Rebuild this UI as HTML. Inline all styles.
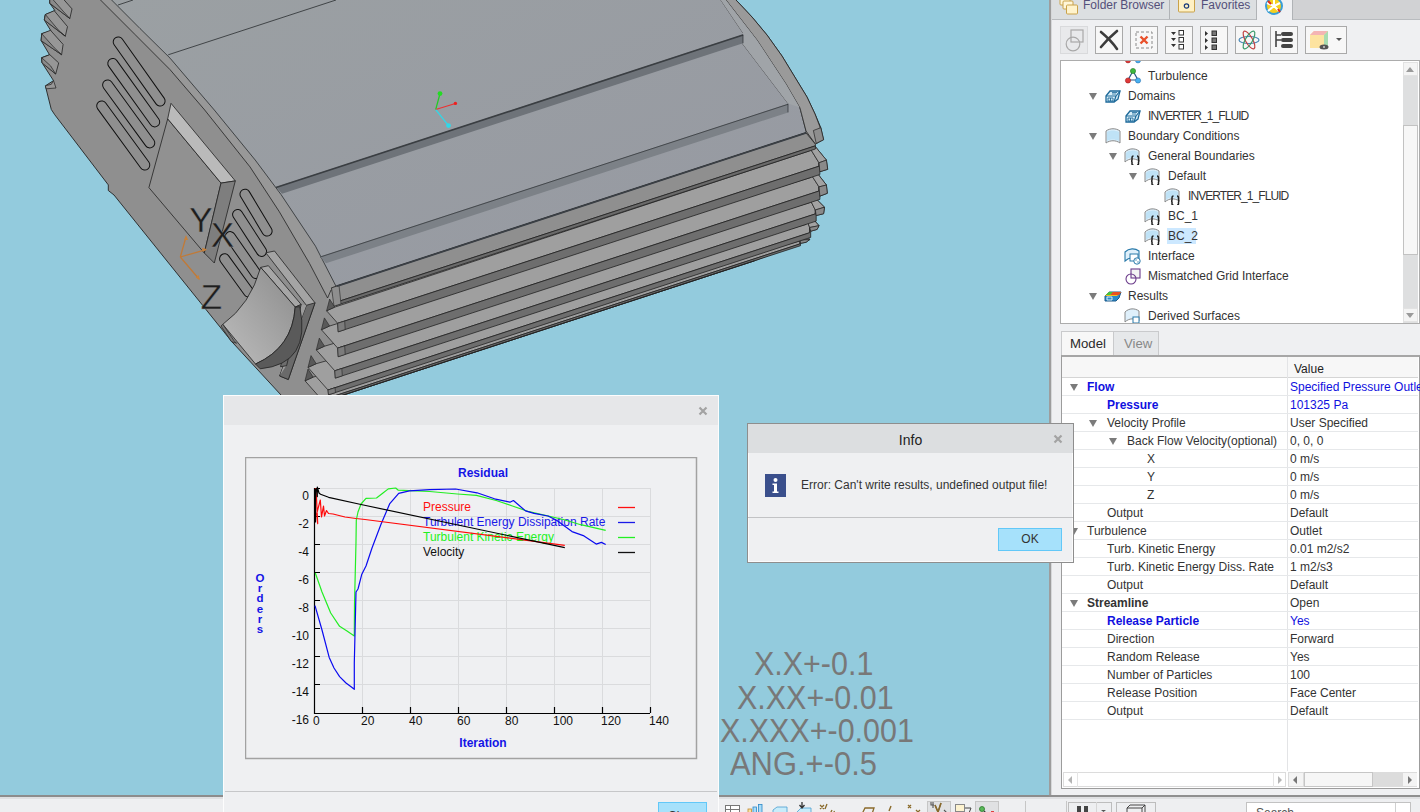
<!DOCTYPE html>
<html><head><meta charset="utf-8">
<style>
*{box-sizing:border-box}
html,body{margin:0;padding:0;width:1420px;height:812px;overflow:hidden;background:#eeeff1;font-family:"Liberation Sans",sans-serif;font-size:12px;color:#333}
.a{position:absolute}
.t{position:absolute;white-space:nowrap;line-height:14px}
#vp{left:0;top:0;width:1049px;height:795px;background:#93cbdd;overflow:hidden}
.gl{position:absolute;left:1062px;width:356px;height:1px;background:#e6e8ea}
.tri{position:absolute;width:0;height:0;border-left:4.5px solid transparent;border-right:4.5px solid transparent;border-top:7px solid #7b7b7b}
.tri2{position:absolute;width:0;height:0;border-left:4.5px solid transparent;border-right:4.5px solid transparent;border-top:7px solid #7b7b7b}
.ic{position:absolute;width:18px;height:18px}
.tb{position:absolute;top:26px;width:28px;height:28px;border:1px solid #a9a9a9;background:#f7f7f7}
</style></head><body>

<div id="vp" class="a"></div>
<svg class="a" style="left:0;top:0" width="1049" height="795" viewBox="0 0 1049 795">
<defs><linearGradient id="gtop" x1="0" y1="0" x2="1" y2="1"><stop offset="0" stop-color="#9ba0a3"/><stop offset="1" stop-color="#9699a2"/></linearGradient><linearGradient id="gblk" x1="0" y1="1" x2="1" y2="0"><stop offset="0" stop-color="#bdbdbd"/><stop offset="1" stop-color="#8c8c8c"/></linearGradient></defs>
<polygon points="50.5,-3.0 736.0,-3.0 736.0,0.0 752.0,17.0 767.0,35.0 782.0,56.0 796.0,79.0 807.0,97.0 815.0,114.0 820.8,127.7 823.6,139.7 816.2,143.4 809.7,147.7 815.3,146.6 826.4,160.1 827.7,169.3 819.9,171.7 810.7,173.9 817.1,173.0 826.4,185.0 827.3,193.3 819.9,196.1 809.7,198.9 815.3,198.0 824.5,207.2 823.6,213.7 816.2,215.5 806.0,218.3 811.6,217.4 819.0,225.7 817.1,229.4 810.7,231.2 799.6,235.9 805.1,234.0 809.7,239.6 806.0,242.3 800.5,243.3 754.5,260.8 330.0,399.4 330.0,420.0 290.0,420.0 281.0,395.0 232.0,341.9 114.0,195.0 108.3,190.5 108.3,184.9 54.8,114.8 51.3,109.5 46.1,88.8 45.4,85.8 53.5,80.6 42.1,62.9 41.7,57.7 49.5,54.7 41.2,40.7 41.7,33.7 51.0,31.0 44.3,20.0 45.4,14.5 55.0,10.7 49.8,3.3 50.5,-3.0" fill="#8f8f8f" stroke="#222" stroke-width="0.9"/>
<polygon points="110.5,-2.0 111.6,0.0 140.0,28.5 170.0,58.1 214.3,110.0 255.2,160.0 281.0,194.5 315.5,246.2 336.7,287.6 345.0,300.0 345.0,310.0 327.0,310.0 327.6,298.0 309.5,263.4 279.3,211.7 250.0,166.9 204.7,110.0 170.0,69.6 135.0,34.5 100.5,0.0 98.5,-2.0" fill="#989898" stroke="none"/>
<polyline points="98.5,-2.0 100.5,0.0 135.0,34.5 170.0,69.6 204.7,110.0 250.0,166.9 279.3,211.7 309.5,263.4 327.6,298.0 331.0,290.0" fill="none" stroke="#222" stroke-width="0.8"/>
<polygon points="110.5,-2.0 111.6,0.0 140.0,28.5 170.0,58.1 214.3,110.0 255.2,160.0 281.0,194.5 315.5,246.2 336.7,287.6 336.7,285.7 806.0,132.4 806.0,131.0 800.0,108.0 786.0,84.0 757.0,40.0 726.0,0.0 724.5,-2.0" fill="url(#gtop)" stroke="#2a2d30" stroke-width="0.8"/>
<polygon points="724.5,-2.0 736.0,-2.0 736.0,0.0 752.0,17.0 767.0,35.0 782.0,56.0 796.0,79.0 807.0,97.0 815.0,114.0 820.0,127.0 822.0,140.0 815.4,144.2 806.0,131.0 800.0,108.0 786.0,84.0 757.0,40.0" fill="#9a9a9a" stroke="#222" stroke-width="0.8"/>
<polygon points="813.4,130.5 820.8,127.7 823.6,139.7 816.2,143.4" fill="#8e8e8e" stroke="#222" stroke-width="0.7"/>
<polyline points="719.5,-2.0 743.0,33.0" fill="none" stroke="#333" stroke-width="0.7"/>
<polyline points="742.0,43.0 788.0,103.4" fill="none" stroke="#333" stroke-width="0.7"/>
<polygon points="720.7,0.0 726.0,0.0 757.0,40.0 786.0,84.0 800.0,108.0 806.0,131.0 800.0,107.4 788.0,103.4 742.0,43.0 743.0,33.0" fill="#a0a4a8" stroke="none"/>
<polyline points="118.0,5.0 133.0,0.0" fill="none" stroke="#2a2d30" stroke-width="0.8"/>
<polyline points="168.2,54.8 336.0,0.0" fill="none" stroke="#2a2d30" stroke-width="0.8"/>
<polygon points="276.0,187.1 743.0,34.6 743.0,43.2 282.0,193.7" fill="#6e7379" stroke="none"/>
<polyline points="276.0,187.6 743.0,35.1" fill="none" stroke="#3a3e42" stroke-width="1.6"/>
<polyline points="743.0,34.6 743.0,43.2" fill="none" stroke="#2a2d30" stroke-width="0.7"/>
<polygon points="320.0,256.6 788.0,103.8 788.0,112.4 326.0,263.3" fill="#7c8187" stroke="none"/>
<polyline points="320.0,257.1 788.0,104.3" fill="none" stroke="#44484c" stroke-width="1.0"/>
<polyline points="788.0,103.8 788.0,112.4" fill="none" stroke="#2a2d30" stroke-width="0.7"/>
<polygon points="305.0,380.8 313.2,377.1 799.6,241.0 799.6,235.9 800.0,240.0 800.0,243.9 322.0,400.0" fill="#9f9f9f" stroke="#222" stroke-width="0.75"/>
<polygon points="322.0,400.0 800.0,243.9 800.0,240.0 800.5,243.3 800.5,245.7 322.5,401.8" fill="#6e6e6e" stroke="#1e1e1e" stroke-width="0.75"/>
<polygon points="322.0,400.0 329.0,397.7 329.5,399.5 322.5,401.8" fill="#7c7c7c" stroke="#222" stroke-width="0.6"/>
<polygon points="305.0,380.8 308.0,369.0 313.2,377.1" fill="#595959" stroke="#222" stroke-width="0.6"/>
<polygon points="799.6,235.9 805.1,234.0 809.7,239.6 800.0,240.0" fill="#a2a2a2" stroke="#222" stroke-width="0.7"/>
<polygon points="800.0,240.0 809.7,239.6 806.0,242.3 800.5,243.3" fill="#8a8a8a" stroke="#222" stroke-width="0.7"/>
<polygon points="308.0,367.4 316.2,363.7 806.0,224.4 806.0,218.3 809.7,227.5 809.7,232.7 328.0,390.0" fill="#9f9f9f" stroke="#222" stroke-width="0.75"/>
<polygon points="328.0,390.0 809.7,232.7 809.7,227.5 810.7,231.2 810.7,237.4 328.5,394.8" fill="#6e6e6e" stroke="#1e1e1e" stroke-width="0.75"/>
<polygon points="328.0,390.0 335.0,387.7 335.5,392.6 328.5,394.8" fill="#7c7c7c" stroke="#222" stroke-width="0.6"/>
<polygon points="308.0,367.4 311.0,355.6 316.2,363.7" fill="#595959" stroke="#222" stroke-width="0.6"/>
<polygon points="806.0,218.3 811.6,217.4 819.0,225.7 809.7,227.5" fill="#a2a2a2" stroke="#222" stroke-width="0.7"/>
<polygon points="809.7,227.5 819.0,225.7 817.1,229.4 810.7,231.2" fill="#8a8a8a" stroke="#222" stroke-width="0.7"/>
<polygon points="316.3,349.9 324.5,346.2 809.7,202.7 809.7,198.9 815.3,210.0 815.3,213.9 334.8,370.8" fill="#9f9f9f" stroke="#222" stroke-width="0.75"/>
<polygon points="334.8,370.8 815.3,213.9 815.3,210.0 816.2,215.5 816.2,221.1 335.3,378.1" fill="#6e6e6e" stroke="#1e1e1e" stroke-width="0.75"/>
<polygon points="334.8,370.8 341.8,368.5 342.3,375.8 335.3,378.1" fill="#7c7c7c" stroke="#222" stroke-width="0.6"/>
<polygon points="316.3,349.9 319.3,338.1 324.5,346.2" fill="#595959" stroke="#222" stroke-width="0.6"/>
<polygon points="809.7,198.9 815.3,198.0 824.5,207.2 815.3,210.0" fill="#a2a2a2" stroke="#222" stroke-width="0.7"/>
<polygon points="815.3,210.0 824.5,207.2 823.6,213.7 816.2,215.5" fill="#8a8a8a" stroke="#222" stroke-width="0.7"/>
<polygon points="321.4,329.7 329.6,326.0 810.7,177.5 810.7,173.9 819.0,186.9 819.0,191.0 337.7,348.1" fill="#9f9f9f" stroke="#222" stroke-width="0.75"/>
<polygon points="337.7,348.1 819.0,191.0 819.0,186.9 819.9,196.1 819.9,199.4 338.2,356.7" fill="#6e6e6e" stroke="#1e1e1e" stroke-width="0.75"/>
<polygon points="337.7,348.1 344.7,345.9 345.2,354.4 338.2,356.7" fill="#7c7c7c" stroke="#222" stroke-width="0.6"/>
<polygon points="321.4,329.7 324.4,317.9 329.6,326.0" fill="#595959" stroke="#222" stroke-width="0.6"/>
<polygon points="810.7,173.9 817.1,173.0 826.4,185.0 819.0,186.9" fill="#a2a2a2" stroke="#222" stroke-width="0.7"/>
<polygon points="819.0,186.9 826.4,185.0 827.3,193.3 819.9,196.1" fill="#8a8a8a" stroke="#222" stroke-width="0.7"/>
<polygon points="326.6,310.8 334.8,307.1 809.7,150.8 809.7,147.7 819.0,162.8 819.0,166.2 337.7,323.3" fill="#9f9f9f" stroke="#222" stroke-width="0.75"/>
<polygon points="337.7,323.3 819.0,166.2 819.0,162.8 819.9,171.7 819.9,174.5 338.2,331.8" fill="#6e6e6e" stroke="#1e1e1e" stroke-width="0.75"/>
<polygon points="337.7,323.3 344.7,321.1 345.2,329.5 338.2,331.8" fill="#7c7c7c" stroke="#222" stroke-width="0.6"/>
<polygon points="326.6,310.8 329.6,299.0 334.8,307.1" fill="#595959" stroke="#222" stroke-width="0.6"/>
<polygon points="809.7,147.7 815.3,146.6 826.4,160.1 819.0,162.8" fill="#a2a2a2" stroke="#222" stroke-width="0.7"/>
<polygon points="819.0,162.8 826.4,160.1 827.7,169.3 819.9,171.7" fill="#8a8a8a" stroke="#222" stroke-width="0.7"/>
<polygon points="331.5,287.9 806.0,132.9 815.4,144.2 815.4,145.8 335.0,302.6" fill="#8f8f8f" stroke="#222" stroke-width="0.75"/>
<polygon points="335.0,302.6 815.4,145.8 815.4,149.0 336.0,305.5" fill="#6a6a6a" stroke="#1e1e1e" stroke-width="0.75"/>
<polygon points="331.5,287.9 339.0,285.4 341.0,303.9 334.0,306.1" fill="#8e8e8e" stroke="#222" stroke-width="0.6"/>
<polyline points="754.5,260.8 330.0,399.4" fill="none" stroke="#222" stroke-width="0.9"/>
<polyline points="337.0,286.2 806.0,133.0" fill="none" stroke="#3a3f45" stroke-width="1.6"/>
<polygon points="49.8,-4.0 58.0,-7.0 72.0,8.9 69.8,18.5 49.8,3.3" fill="#979797" stroke="#222" stroke-width="0.8"/>
<polygon points="49.8,-4.0 63.8,11.9 69.8,18.5 49.8,3.3" fill="#8a8a8a" stroke="#222" stroke-width="0.7"/>
<polygon points="45.4,14.5 54.2,10.7 67.5,26.6 65.3,36.2 44.3,20.0" fill="#979797" stroke="#222" stroke-width="0.8"/>
<polygon points="45.4,14.5 58.7,30.4 65.3,36.2 44.3,20.0" fill="#8a8a8a" stroke="#222" stroke-width="0.7"/>
<polygon points="41.7,33.7 50.5,30.3 63.1,44.4 61.6,54.7 41.2,40.7" fill="#979797" stroke="#222" stroke-width="0.8"/>
<polygon points="41.7,33.7 54.3,47.8 61.6,54.7 41.2,40.7" fill="#8a8a8a" stroke="#222" stroke-width="0.7"/>
<polygon points="41.7,57.7 49.8,54.7 58.7,62.9 55.7,74.0 42.1,62.9" fill="#979797" stroke="#222" stroke-width="0.8"/>
<polygon points="41.7,57.7 50.6,65.9 55.7,74.0 42.1,62.9" fill="#8a8a8a" stroke="#222" stroke-width="0.7"/>
<polygon points="45.4,85.8 51.3,84.3 53.5,80.6 56.0,88.0 46.1,88.8" fill="#979797" stroke="#222" stroke-width="0.7"/>
<line x1="118.2" y1="41.9" x2="160.1" y2="101" stroke="#111" stroke-width="11" stroke-linecap="round"/>
<line x1="118.2" y1="41.9" x2="160.1" y2="101" stroke="#8f8f8f" stroke-width="9" stroke-linecap="round"/>
<line x1="112.8" y1="63.5" x2="154.7" y2="121.9" stroke="#111" stroke-width="11" stroke-linecap="round"/>
<line x1="112.8" y1="63.5" x2="154.7" y2="121.9" stroke="#8f8f8f" stroke-width="9" stroke-linecap="round"/>
<line x1="107.6" y1="85" x2="149.8" y2="142.9" stroke="#111" stroke-width="11" stroke-linecap="round"/>
<line x1="107.6" y1="85" x2="149.8" y2="142.9" stroke="#8f8f8f" stroke-width="9" stroke-linecap="round"/>
<line x1="101.7" y1="105.9" x2="144.8" y2="165" stroke="#111" stroke-width="11" stroke-linecap="round"/>
<line x1="101.7" y1="105.9" x2="144.8" y2="165" stroke="#8f8f8f" stroke-width="9" stroke-linecap="round"/>
<line x1="245" y1="194.2" x2="267.1" y2="231.1" stroke="#111" stroke-width="11" stroke-linecap="round"/>
<line x1="245" y1="194.2" x2="267.1" y2="231.1" stroke="#8f8f8f" stroke-width="9" stroke-linecap="round"/>
<line x1="237.6" y1="214.5" x2="261.6" y2="251.4" stroke="#111" stroke-width="11" stroke-linecap="round"/>
<line x1="237.6" y1="214.5" x2="261.6" y2="251.4" stroke="#8f8f8f" stroke-width="9" stroke-linecap="round"/>
<line x1="230.2" y1="236.6" x2="256" y2="273.6" stroke="#111" stroke-width="11" stroke-linecap="round"/>
<line x1="230.2" y1="236.6" x2="256" y2="273.6" stroke="#8f8f8f" stroke-width="9" stroke-linecap="round"/>
<line x1="224.6" y1="258.8" x2="248.6" y2="292" stroke="#111" stroke-width="11" stroke-linecap="round"/>
<line x1="224.6" y1="258.8" x2="248.6" y2="292" stroke="#8f8f8f" stroke-width="9" stroke-linecap="round"/>
<polygon points="167.7,118.8 221.0,183.1 204.3,253.0 148.9,187.6" fill="#919191" stroke="#222" stroke-width="0.8"/>
<polygon points="171.0,103.3 235.3,180.9 221.0,183.1 167.7,118.8" fill="#bababa" stroke="#222" stroke-width="0.8"/>
<polygon points="235.3,180.9 214.3,263.0 204.3,253.0 221.0,183.1" fill="#7e7e7e" stroke="#222" stroke-width="0.8"/>
<polygon points="265.9,252.8 274.5,251.0 315.0,302.8 288.3,379.5 279.7,376.0 306.4,305.3" fill="#a4a4a4" stroke="#222" stroke-width="0.8"/>
<polygon points="306.4,305.3 315.0,302.8 288.3,379.5 279.7,376.0" fill="#6a6a6a" stroke="#222" stroke-width="0.8"/>
<polygon points="301.2,304.5 306.4,305.3 279.7,376.0 285.7,366.6" fill="#9c9c9c" stroke="none"/>
<polygon points="260.7,267.4 268.4,265.7 301.2,304.5 295.2,307.1" fill="#a6a6a6" stroke="#222" stroke-width="0.8"/>
<polygon points="295.2,307.1 301.2,304.5 286.6,365.7 280.5,366.7" fill="#6e6e6e" stroke="#222" stroke-width="0.8"/>
<path d="M222.8 324.3 Q250.3 304.5 260.7 267.4 L295.2 307.1 Q292.6 347.6 255.5 364.0 Z" fill="url(#gblk)" stroke="#222" stroke-width="0.8"/>
<path d="M295.2 307.1 L299.8 306.7 Q311.6 364.0 260.2 368.8 L255.5 364.0 Q292.6 347.6 295.2 307.1Z" fill="#5a5a5a" stroke="#222" stroke-width="0.8"/>
<polygon points="222.8,324.3 221.0,326.0 231.4,341.6 236.6,343.3 234.0,340.7" fill="#7a7a7a" stroke="#222" stroke-width="0.7"/>
<g font-family="Liberation Sans" font-size="35" fill="#1e1e1e" stroke="#8f8f8f" stroke-width="0.4"><text x="189.3" y="232">Y</text><text x="210.8" y="246.5">X</text><text x="200.8" y="308.8">Z</text></g>
<path d="M180.3 257 L186 237 M180.3 257 L206 249.6 M180.3 257 L199 279" stroke="#c07a38" stroke-width="1.3" fill="none"/>
<path d="M186 235 l-2 5 h4z M207 249.3 l-5 -1.5 1 4z M200 280 l-1.5 -5 -3 2.5z" fill="#c8813a"/>
<path d="M435.7 109.6 L440 93.6" stroke="#22cc22" stroke-width="1.3"/><circle cx="440" cy="93.6" r="2.4" fill="#22dd22"/>
<path d="M435.7 109.6 L455.4 103.4" stroke="#ee3030" stroke-width="1.1"/><circle cx="455.4" cy="103.4" r="1.7" fill="#ee2020"/>
<path d="M435.7 109.6 L448.5 125.6" stroke="#30d8e8" stroke-width="1.3"/><circle cx="448.5" cy="125.6" r="2.4" fill="#30d8e8"/>
</svg>
<div class="a" style="left:0;top:795px;width:1049px;height:2px;background:#8c8c8c"></div>
<div class="a" style="left:0;top:797px;width:1049px;height:2px;background:#dfe0e2"></div>

<!-- right panel -->
<div class="a" style="left:1049px;top:0;width:371px;height:795px;background:#eff0f2"></div>
<div class="a" style="left:1049px;top:0;width:2px;height:797px;background:#9d9d9d"></div>
<div class="a" style="left:1051px;top:0;width:1px;height:795px;background:#d6d8da"></div>
<!-- tab strip -->
<div class="a" style="left:1052px;top:0;width:368px;height:19px;background:#dcdfe1"></div>
<div class="a" style="left:1292px;top:0;width:128px;height:19px;background:#d1d2d4"></div>
<div class="a" style="left:1052px;top:19px;width:368px;height:1px;background:#b9bcbf"></div>
<div class="a" style="left:1169px;top:0;width:1px;height:19px;background:#b0b3b6"></div>
<div class="a" style="left:1256px;top:0;width:1px;height:20px;background:#b0b3b6"></div>
<div class="a" style="left:1257px;top:0;width:35px;height:20px;background:#eff0f2"></div>
<div class="a" style="left:1292px;top:0;width:1px;height:20px;background:#b0b3b6"></div>
<div class="t" style="left:1083px;top:-2px;color:#54507a">Folder Browser</div>
<div class="t" style="left:1201px;top:-2px;color:#54507a">Favorites</div>
<svg class="a" style="left:1059px;top:0" width="22" height="16" viewBox="0 0 22 16">
<rect x="1" y="-3" width="10" height="8" rx="1" fill="#fff6d8" stroke="#c9a24a"/>
<rect x="4" y="1" width="10" height="8" rx="1" fill="#fff6d8" stroke="#c9a24a"/>
<rect x="7.5" y="5" width="11" height="9" rx="1" fill="#fff3cc" stroke="#c9a24a"/>
</svg>
<svg class="a" style="left:1177px;top:0" width="20" height="14" viewBox="0 0 20 14">
<rect x="1.5" y="-2" width="16" height="14" rx="1" fill="#fff1c4" stroke="#c9a24a"/>
<circle cx="9.5" cy="6" r="2.2" fill="none" stroke="#1a3a7a" stroke-width="1.2"/>
</svg>
<svg class="a" style="left:1264px;top:0" width="20" height="16" viewBox="0 0 20 16">
<ellipse cx="10" cy="6" rx="9" ry="9" fill="#3a9ed8"/>
<ellipse cx="10" cy="6" rx="7" ry="7" fill="#f5d020"/>
<path d="M10 6 L10 -1 M10 6 L16 3 M10 6 L15 11 M10 6 L4 11 M10 6 L3 3" stroke="#fff" stroke-width="2"/>
<circle cx="10" cy="6" r="2" fill="#fff"/>
<path d="M4 1 L7 4 M14 9 L16 12" stroke="#e03020" stroke-width="2"/>
</svg>
<!-- toolbar buttons -->
<div class="tb" style="left:1060px;background:#e8e9eb;border-color:#d9dadc"></div>
<svg class="a" style="left:1060px;top:26px" width="28" height="28" viewBox="0 0 28 28">
<rect x="11" y="4" width="12" height="12" fill="none" stroke="#a8a8a8" stroke-width="1.2"/>
<circle cx="13" cy="18" r="6.8" fill="none" stroke="#a8a8a8" stroke-width="1.2"/>
</svg>
<div class="tb" style="left:1095px"></div>
<svg class="a" style="left:1095px;top:26px" width="28" height="28" viewBox="0 0 28 28">
<path d="M6 6 C12 11 18 17 22 23 M22 5 C16 10 11 15 6 21" stroke="#3c3c3c" stroke-width="2.6" fill="none" stroke-linecap="round"/>
</svg>
<div class="tb" style="left:1130px"></div>
<svg class="a" style="left:1130px;top:26px" width="28" height="28" viewBox="0 0 28 28">
<rect x="6" y="6" width="16" height="16" fill="none" stroke="#8a8a8a" stroke-dasharray="3 2"/>
<path d="M10.5 10.5 L17.5 17.5 M17.5 10.5 L10.5 17.5" stroke="#e8502a" stroke-width="2.4"/>
</svg>
<div class="tb" style="left:1165px"></div>
<svg class="a" style="left:1165px;top:26px" width="28" height="28" viewBox="0 0 28 28">
<path d="M6 6 h5 l-2.5 3z M6 12 h5 l-2.5 3z M6 18 h5 l-2.5 3z" fill="#333"/>
<rect x="14" y="4.5" width="4.5" height="4.5" fill="#fff" stroke="#333"/>
<rect x="14" y="11.5" width="4.5" height="4.5" fill="#fff" stroke="#333"/>
<rect x="14" y="18.5" width="4.5" height="4.5" fill="#fff" stroke="#333"/>
</svg>
<div class="tb" style="left:1200px"></div>
<svg class="a" style="left:1200px;top:26px" width="28" height="28" viewBox="0 0 28 28">
<path d="M5 5 v5 l3 -2.5z M5 12 v5 l3 -2.5z M5 19 v5 l3 -2.5z" fill="#333"/>
<rect x="12" y="5" width="4.5" height="4.5" fill="#777" stroke="#333"/>
<rect x="12" y="12" width="4.5" height="4.5" fill="#777" stroke="#333"/>
<rect x="12" y="19" width="4.5" height="4.5" fill="#777" stroke="#333"/>
</svg>
<div class="tb" style="left:1235px"></div>
<svg class="a" style="left:1235px;top:26px" width="28" height="28" viewBox="0 0 28 28">
<ellipse cx="14" cy="14" rx="10" ry="3.5" fill="none" stroke="#4a88b8" stroke-width="1.2"/>
<ellipse cx="14" cy="14" rx="10" ry="3.5" fill="none" stroke="#c04040" stroke-width="1.2" transform="rotate(60 14 14)"/>
<ellipse cx="14" cy="14" rx="10" ry="3.5" fill="none" stroke="#3a9a6a" stroke-width="1.2" transform="rotate(-60 14 14)"/>
</svg>
<div class="tb" style="left:1270px"></div>
<svg class="a" style="left:1270px;top:26px" width="28" height="28" viewBox="0 0 28 28">
<path d="M6 5 v16 M6 9 h5 M6 14 h5" stroke="#444" stroke-width="1.6" fill="none"/>
<rect x="11" y="6" width="12" height="4" rx="2" fill="#444"/>
<rect x="11" y="12" width="12" height="4" rx="2" fill="#444"/>
<rect x="11" y="18" width="12" height="4" rx="2" fill="#444"/>
</svg>
<div class="tb" style="left:1305px;width:42px"></div>
<svg class="a" style="left:1305px;top:26px" width="42" height="28" viewBox="0 0 42 28">
<path d="M5 9 L9 5 H23 V22 H5z" fill="#fde3a0"/>
<path d="M5 9 L9 5 H23 L19 9z" fill="#f4b4b4"/>
<path d="M19 9 L23 5 V20 L19 23z" fill="#a8dcb0"/>
<ellipse cx="19" cy="21" rx="4.5" ry="2.5" fill="#555"/>
<circle cx="19" cy="21" r="1" fill="#ccc"/>
<path d="M31 12 h6 l-3 3z" fill="#555"/>
</svg>
<!-- tree box -->
<div class="a" style="left:1060px;top:60px;width:360px;height:264px;background:#fff;border:1px solid #acacac"></div>
<div class="a" style="left:1403px;top:62px;width:15px;height:261px;background:#dedfe0"></div>
<div class="a" style="left:1403px;top:62px;width:15px;height:14px;background:#f4f4f4;border:1px solid #e2e2e2"></div>
<div class="a" style="left:1403px;top:308px;width:15px;height:14px;background:#f4f4f4;border:1px solid #e2e2e2"></div>
<div class="a" style="left:1403px;top:125px;width:15px;height:130px;background:#f7f7f7;border:1px solid #c2c2c2"></div>
<div class="a" style="left:1406px;top:67px;width:0;height:0;border-left:4.5px solid transparent;border-right:4.5px solid transparent;border-bottom:5px solid #9a9a9a"></div>
<div class="a" style="left:1406px;top:313px;width:0;height:0;border-left:4.5px solid transparent;border-right:4.5px solid transparent;border-top:5px solid #9a9a9a"></div>
<div class="a" style="left:0;top:0;width:1420px;height:812px;clip-path:inset(61px 17px 489px 1061px)">
<svg class="a" style="left:1124px;top:52px" width="18" height="12"><circle cx="4" cy="8.3" r="2.6" fill="#e03838" stroke="#9a2020" stroke-width=".6"/><circle cx="14" cy="8.3" r="2.6" fill="#48b0f0" stroke="#2a70b0" stroke-width=".6"/></svg>
<div class="ic" style="left:1124px;top:67px"><svg width="18" height="18" viewBox="0 0 18 18"><path d="M9 4 L4 13 H14 Z" fill="none" stroke="#2a5a8a" stroke-width="1.2"/><circle cx="9" cy="4" r="2.6" fill="#3cb83c" stroke="#2a7a2a" stroke-width=".6"/><circle cx="4" cy="13.5" r="2.6" fill="#e03838" stroke="#9a2020" stroke-width=".6"/><circle cx="14" cy="13.5" r="2.6" fill="#48b0f0" stroke="#2a70b0" stroke-width=".6"/></svg></div>
<div class="t" style="left:1148px;top:69px">Turbulence</div>
<div class="tri2" style="left:1089px;top:93px"></div>
<div class="ic" style="left:1104px;top:87px"><svg width="18" height="18" viewBox="0 0 18 18"><path d="M2 9 L6 4 H16 L14 12 L10 15 H2 Z" fill="#d8eef8" stroke="#1e6a9a" stroke-width="1.3"/><path d="M2 9 H12 L16 4 M12 9 L10 15" fill="none" stroke="#1e6a9a" stroke-width="1.2"/><path d="M4 11 h5 v3 h-5z M6.5 11 v3" fill="none" stroke="#1e6a9a" stroke-width=".9"/><path d="M8 5.5 h5 M8 7 h4" stroke="#1e6a9a" stroke-width=".8"/></svg></div>
<div class="t" style="left:1128px;top:89px">Domains</div>
<div class="ic" style="left:1124px;top:107px"><svg width="18" height="18" viewBox="0 0 18 18"><path d="M2 9 L6 4 H16 L14 12 L10 15 H2 Z" fill="#d8eef8" stroke="#1e6a9a" stroke-width="1.3"/><path d="M2 9 H12 L16 4 M12 9 L10 15" fill="none" stroke="#1e6a9a" stroke-width="1.2"/><path d="M4 11 h5 v3 h-5z M6.5 11 v3" fill="none" stroke="#1e6a9a" stroke-width=".9"/><path d="M8 5.5 h5 M8 7 h4" stroke="#1e6a9a" stroke-width=".8"/></svg></div>
<div class="t" style="left:1148px;top:109px;letter-spacing:-0.93px">INVERTER_1_FLUID</div>
<div class="tri2" style="left:1089px;top:133px"></div>
<div class="ic" style="left:1104px;top:127px"><svg width="18" height="18" viewBox="0 0 18 18"><path d="M2 4 C6 1 12 1 16 4 V16 C12 13 6 13 2 16 Z" fill="#dff0fb" stroke="#8a8a8a" stroke-width="1"/><path d="M3 5 C6 3 11 3 15 5 V14 C11 12 6 12 3 14Z" fill="#bfe2f6"/></svg></div>
<div class="t" style="left:1128px;top:129px">Boundary Conditions</div>
<div class="tri2" style="left:1109px;top:153px"></div>
<div class="ic" style="left:1124px;top:147px"><svg width="18" height="18" viewBox="0 0 18 18"><path d="M1 5 C5 1 11 1 15 4 V14 C11 11 5 11 1 15 Z" fill="#dff0fb" stroke="#8a8a8a" stroke-width="1"/><path d="M2 6 C5 3 10 3 14 5 V12 C10 10 5 10 2 13Z" fill="#bfe2f6"/><path d="M9.5 9 q-1.5 0 -1.5 2 v2 q0 1 -1 1 q1 0 1 1 v2 q0 1 1.5 1 M13 9 q1.5 0 1.5 2 v2 q0 1 1 1 q-1 0 -1 1 v2 q0 1 -1.5 1" fill="none" stroke="#222" stroke-width="1.5"/></svg></div>
<div class="t" style="left:1148px;top:149px">General Boundaries</div>
<div class="tri2" style="left:1129px;top:173px"></div>
<div class="ic" style="left:1144px;top:167px"><svg width="18" height="18" viewBox="0 0 18 18"><path d="M1 5 C5 1 11 1 15 4 V14 C11 11 5 11 1 15 Z" fill="#dff0fb" stroke="#8a8a8a" stroke-width="1"/><path d="M2 6 C5 3 10 3 14 5 V12 C10 10 5 10 2 13Z" fill="#bfe2f6"/><path d="M9.5 9 q-1.5 0 -1.5 2 v2 q0 1 -1 1 q1 0 1 1 v2 q0 1 1.5 1 M13 9 q1.5 0 1.5 2 v2 q0 1 1 1 q-1 0 -1 1 v2 q0 1 -1.5 1" fill="none" stroke="#222" stroke-width="1.5"/></svg></div>
<div class="t" style="left:1168px;top:169px">Default</div>
<div class="ic" style="left:1164px;top:187px"><svg width="18" height="18" viewBox="0 0 18 18"><path d="M1 5 C5 1 11 1 15 4 V14 C11 11 5 11 1 15 Z" fill="#dff0fb" stroke="#8a8a8a" stroke-width="1"/><path d="M2 6 C5 3 10 3 14 5 V12 C10 10 5 10 2 13Z" fill="#bfe2f6"/><path d="M9.5 9 q-1.5 0 -1.5 2 v2 q0 1 -1 1 q1 0 1 1 v2 q0 1 1.5 1 M13 9 q1.5 0 1.5 2 v2 q0 1 1 1 q-1 0 -1 1 v2 q0 1 -1.5 1" fill="none" stroke="#222" stroke-width="1.5"/></svg></div>
<div class="t" style="left:1188px;top:189px;letter-spacing:-0.93px">INVERTER_1_FLUID</div>
<div class="ic" style="left:1144px;top:207px"><svg width="18" height="18" viewBox="0 0 18 18"><path d="M1 5 C5 1 11 1 15 4 V14 C11 11 5 11 1 15 Z" fill="#dff0fb" stroke="#8a8a8a" stroke-width="1"/><path d="M2 6 C5 3 10 3 14 5 V12 C10 10 5 10 2 13Z" fill="#bfe2f6"/><path d="M9.5 9 q-1.5 0 -1.5 2 v2 q0 1 -1 1 q1 0 1 1 v2 q0 1 1.5 1 M13 9 q1.5 0 1.5 2 v2 q0 1 1 1 q-1 0 -1 1 v2 q0 1 -1.5 1" fill="none" stroke="#222" stroke-width="1.5"/></svg></div>
<div class="t" style="left:1168px;top:209px">BC_1</div>
<div class="ic" style="left:1144px;top:227px"><svg width="18" height="18" viewBox="0 0 18 18"><path d="M1 5 C5 1 11 1 15 4 V14 C11 11 5 11 1 15 Z" fill="#dff0fb" stroke="#8a8a8a" stroke-width="1"/><path d="M2 6 C5 3 10 3 14 5 V12 C10 10 5 10 2 13Z" fill="#bfe2f6"/><path d="M9.5 9 q-1.5 0 -1.5 2 v2 q0 1 -1 1 q1 0 1 1 v2 q0 1 1.5 1 M13 9 q1.5 0 1.5 2 v2 q0 1 1 1 q-1 0 -1 1 v2 q0 1 -1.5 1" fill="none" stroke="#222" stroke-width="1.5"/></svg></div>
<div class="a" style="left:1167px;top:228px;width:29px;height:16px;background:#cce8ff"></div>
<div class="t" style="left:1168px;top:229px">BC_2</div>
<div class="ic" style="left:1124px;top:247px"><svg width="18" height="18" viewBox="0 0 18 18"><path d="M1 5 C5 1 11 1 15 4 V13 C11 10 5 10 1 14 Z" fill="#dff0fb" stroke="#2a7aaa" stroke-width="1.1"/><rect x="6" y="7" width="8" height="7" fill="#fff" stroke="#2a7aaa"/><circle cx="13" cy="14" r="3.2" fill="#fff" stroke="#2a7aaa"/><circle cx="12" cy="13" r=".7" fill="#2a7aaa"/><circle cx="14" cy="15" r=".7" fill="#2a7aaa"/></svg></div>
<div class="t" style="left:1148px;top:249px">Interface</div>
<div class="ic" style="left:1124px;top:267px"><svg width="18" height="18" viewBox="0 0 18 18"><rect x="7" y="2" width="9" height="9" fill="#f4f4f4" stroke="#6a3a8a" stroke-width="1.1"/><circle cx="7" cy="12" r="5" fill="none" stroke="#6a3a8a" stroke-width="1.1"/></svg></div>
<div class="t" style="left:1148px;top:269px">Mismatched Grid Interface</div>
<div class="tri2" style="left:1089px;top:293px"></div>
<div class="ic" style="left:1104px;top:287px"><svg width="18" height="18" viewBox="0 0 18 18"><path d="M1 9 L5 5 H17 L15 11 L12 14 H1 Z" fill="#2a8ac8" stroke="#1e5a8a" stroke-width="1"/><path d="M5 5 H17 L13 9 H1z" fill="#f0c020"/><path d="M8 5 H17 L15 8 H6z" fill="#e85020"/><path d="M2 8 L5 5 H9 L6 8z" fill="#40c840"/><path d="M3 10 h5 v3 h-5z" fill="none" stroke="#fff" stroke-width=".8"/></svg></div>
<div class="t" style="left:1128px;top:289px">Results</div>
<div class="ic" style="left:1124px;top:307px"><svg width="18" height="18" viewBox="0 0 18 18"><path d="M1 5 C5 1 11 1 15 4 V14 C11 11 5 11 1 15 Z" fill="#dff0fb" stroke="#8a8a8a" stroke-width="1"/><rect x="9" y="10" width="6" height="6" fill="#fff" stroke="#2a7aaa"/></svg></div>
<div class="t" style="left:1148px;top:309px">Derived Surfaces</div>
</div>

<!-- model/view tabs -->
<div class="a" style="left:1061px;top:331px;width:53px;height:25px;background:#f7f7f7;border:1px solid #c9cacc;border-bottom:none"></div>
<div class="a" style="left:1113px;top:331px;width:46px;height:24px;background:#e6e8ea;border:1px solid #c9cacc;border-bottom:none"></div>
<div class="t" style="left:1070px;top:337px;font-size:13.2px;color:#2a2a2a">Model</div>
<div class="t" style="left:1124px;top:337px;font-size:13.2px;color:#888">View</div>
<!-- grid -->
<div class="a" style="left:1061px;top:355px;width:359px;height:434px;background:#fff;border:1px solid #9c9c9c;border-top:2px solid #a6a6a6"></div>
<div class="a" style="left:1062px;top:357px;width:356px;height:21px;background:#f7f7f7"></div>
<div class="a" style="left:1062px;top:377px;width:356px;height:1px;background:#d5d5d5"></div>
<div class="a" style="left:1287px;top:357px;width:1px;height:414px;background:#e3e4e6"></div>
<div class="t" style="left:1294px;top:362px;color:#222">Value</div>
<div class="gl" style="top:395px"></div>
<div class="tri" style="left:1070px;top:384px"></div>
<div class="t" style="left:1087px;top:380px;font-weight:bold;color:#1010e0">Flow</div>
<div class="t" style="left:1290px;top:380px;color:#1010e0">Specified Pressure Outle</div>
<div class="gl" style="top:413px"></div>
<div class="t" style="left:1107px;top:398px;font-weight:bold;color:#1010e0">Pressure</div>
<div class="t" style="left:1290px;top:398px;color:#1010e0">101325 Pa</div>
<div class="gl" style="top:431px"></div>
<div class="tri" style="left:1089px;top:420px"></div>
<div class="t" style="left:1107px;top:416px">Velocity Profile</div>
<div class="t" style="left:1290px;top:416px">User Specified</div>
<div class="gl" style="top:449px"></div>
<div class="tri" style="left:1109px;top:438px"></div>
<div class="t" style="left:1127px;top:434px">Back Flow Velocity(optional)</div>
<div class="t" style="left:1290px;top:434px">0, 0, 0</div>
<div class="gl" style="top:467px"></div>
<div class="t" style="left:1147px;top:452px">X</div>
<div class="t" style="left:1290px;top:452px">0 m/s</div>
<div class="gl" style="top:485px"></div>
<div class="t" style="left:1147px;top:470px">Y</div>
<div class="t" style="left:1290px;top:470px">0 m/s</div>
<div class="gl" style="top:503px"></div>
<div class="t" style="left:1147px;top:488px">Z</div>
<div class="t" style="left:1290px;top:488px">0 m/s</div>
<div class="gl" style="top:521px"></div>
<div class="t" style="left:1107px;top:506px">Output</div>
<div class="t" style="left:1290px;top:506px">Default</div>
<div class="gl" style="top:539px"></div>
<div class="tri" style="left:1070px;top:528px"></div>
<div class="t" style="left:1087px;top:524px">Turbulence</div>
<div class="t" style="left:1290px;top:524px">Outlet</div>
<div class="gl" style="top:557px"></div>
<div class="t" style="left:1107px;top:542px">Turb. Kinetic Energy</div>
<div class="t" style="left:1290px;top:542px">0.01 m2/s2</div>
<div class="gl" style="top:575px"></div>
<div class="t" style="left:1107px;top:560px">Turb. Kinetic Energy Diss. Rate</div>
<div class="t" style="left:1290px;top:560px">1 m2/s3</div>
<div class="gl" style="top:593px"></div>
<div class="t" style="left:1107px;top:578px">Output</div>
<div class="t" style="left:1290px;top:578px">Default</div>
<div class="gl" style="top:611px"></div>
<div class="tri" style="left:1070px;top:600px"></div>
<div class="t" style="left:1087px;top:596px;font-weight:bold;color:#333">Streamline</div>
<div class="t" style="left:1290px;top:596px">Open</div>
<div class="gl" style="top:629px"></div>
<div class="t" style="left:1107px;top:614px;font-weight:bold;color:#1010e0">Release Particle</div>
<div class="t" style="left:1290px;top:614px;color:#1010e0">Yes</div>
<div class="gl" style="top:647px"></div>
<div class="t" style="left:1107px;top:632px">Direction</div>
<div class="t" style="left:1290px;top:632px">Forward</div>
<div class="gl" style="top:665px"></div>
<div class="t" style="left:1107px;top:650px">Random Release</div>
<div class="t" style="left:1290px;top:650px">Yes</div>
<div class="gl" style="top:683px"></div>
<div class="t" style="left:1107px;top:668px">Number of Particles</div>
<div class="t" style="left:1290px;top:668px">100</div>
<div class="gl" style="top:701px"></div>
<div class="t" style="left:1107px;top:686px">Release Position</div>
<div class="t" style="left:1290px;top:686px">Face Center</div>
<div class="gl" style="top:719px"></div>
<div class="t" style="left:1107px;top:704px">Output</div>
<div class="t" style="left:1290px;top:704px">Default</div>
<!-- h scrollbars -->
<div class="a" style="left:1063px;top:772px;width:223px;height:15px;background:#fff;border:1px solid #dcdcdc"></div>
<div class="a" style="left:1077px;top:772px;width:1px;height:15px;background:#e5e5e5"></div>
<div class="a" style="left:1273px;top:772px;width:1px;height:15px;background:#e5e5e5"></div>
<div class="a" style="left:1068px;top:776px;width:0;height:0;border-top:4px solid transparent;border-bottom:4px solid transparent;border-right:4px solid #b5b5b5"></div>
<div class="a" style="left:1278px;top:776px;width:0;height:0;border-top:4px solid transparent;border-bottom:4px solid transparent;border-left:4px solid #b5b5b5"></div>
<div class="a" style="left:1288px;top:772px;width:129px;height:15px;background:#dcdcdc;border:1px solid #dcdcdc"></div>
<div class="a" style="left:1289px;top:773px;width:14px;height:13px;background:#f4f4f4"></div>
<div class="a" style="left:1403px;top:773px;width:14px;height:13px;background:#f4f4f4"></div>
<div class="a" style="left:1304px;top:772px;width:69px;height:15px;background:#f6f6f6;border:1px solid #c6c6c6"></div>
<div class="a" style="left:1293px;top:776px;width:0;height:0;border-top:4px solid transparent;border-bottom:4px solid transparent;border-right:4px solid #777"></div>
<div class="a" style="left:1408px;top:776px;width:0;height:0;border-top:4px solid transparent;border-bottom:4px solid transparent;border-left:4px solid #777"></div>
<div class="a" id="panelbot" style="left:1049px;top:795px;width:371px;height:2px;background:#8f8f8f"></div>
<div class="a" style="left:1049px;top:797px;width:371px;height:2px;background:#dfe0e2"></div>

<!-- residual dialog -->
<div class="a" style="left:223px;top:395px;width:496px;height:420px;background:#eff0f2;border:1px solid #fdfdfd"></div>
<div class="a" style="left:224px;top:396px;width:494px;height:29px;background:#e6e7e9"></div>
<svg class="a" style="left:698px;top:406px" width="10" height="10" viewBox="0 0 10 10"><path d="M1.5 1.5 L8.5 8.5 M8.5 1.5 L1.5 8.5" stroke="#a3a3a3" stroke-width="2.2"/></svg>
<svg class="a" style="left:245px;top:457px" width="453" height="303" viewBox="245 457 453 303">
<rect x="245.5" y="457.5" width="451" height="301" fill="#eff0f2" stroke="#a2a2a2" stroke-width="1.5"/>
<path d="M362.5 488 V713 M410.5 488 V713 M458.5 488 V713 M506.5 488 V713 M554.5 488 V713 M602.5 488 V713 M650.5 488 V713 M314 488.5 H650.5 M314 516.5 H650.5 M314 544.5 H650.5 M314 572.5 H650.5 M314 600.5 H650.5 M314 628.5 H650.5 M314 656.5 H650.5 M314 684.5 H650.5" stroke="#dadbdd" stroke-width="1" fill="none"/>
<path d="M314.5 488 V713.5 H650" stroke="#000" stroke-width="1.2" fill="none"/>
<path d="M314 488.5 H320 M314 516.5 H320 M314 544.5 H320 M314 572.5 H320 M314 600.5 H320 M314 628.5 H320 M314 656.5 H320 M314 684.5 H320 M362.5 713 V707 M410.5 713 V707 M458.5 713 V707 M506.5 713 V707 M554.5 713 V707 M602.5 713 V707 M650.5 713 V707" stroke="#000" stroke-width="1.2" fill="none"/>
<g font-family="Liberation Sans" font-size="12" fill="#111"><text x="309" y="500" text-anchor="end">0</text><text x="309" y="528" text-anchor="end">-2</text><text x="309" y="556" text-anchor="end">-4</text><text x="309" y="584" text-anchor="end">-6</text><text x="309" y="612" text-anchor="end">-8</text><text x="309" y="640" text-anchor="end">-10</text><text x="309" y="668" text-anchor="end">-12</text><text x="309" y="696" text-anchor="end">-14</text><text x="309" y="724" text-anchor="end">-16</text><text x="313.0" y="725">0</text><text x="361.0" y="725">20</text><text x="409.0" y="725">40</text><text x="457.0" y="725">60</text><text x="505.0" y="725">80</text><text x="553.0" y="725">100</text><text x="601.0" y="725">120</text><text x="649.0" y="725">140</text></g>
<text x="483" y="477" text-anchor="middle" font-family="Liberation Sans" font-size="12" font-weight="bold" fill="#1414e6">Residual</text>
<text x="483" y="747" text-anchor="middle" font-family="Liberation Sans" font-size="12" font-weight="bold" fill="#1414e6">Iteration</text>
<g font-family="Liberation Sans" font-size="11.5" font-weight="bold" fill="#1414e6"><text x="260" y="582.0" text-anchor="middle">O</text><text x="260" y="592.2" text-anchor="middle">r</text><text x="260" y="602.4" text-anchor="middle">d</text><text x="260" y="612.6" text-anchor="middle">e</text><text x="260" y="622.8" text-anchor="middle">r</text><text x="260" y="633.0" text-anchor="middle">s</text></g>
<text x="423" y="511" font-family="Liberation Sans" font-size="12" fill="#ff1010">Pressure</text>
<path d="M618 507.5 H635" stroke="#ff1010" stroke-width="1.3"/>
<text x="423" y="526" font-family="Liberation Sans" font-size="12" fill="#1a1ae8">Turbulent Energy Dissipation Rate</text>
<path d="M618 522.5 H635" stroke="#1a1ae8" stroke-width="1.3"/>
<text x="423" y="541" font-family="Liberation Sans" font-size="12" fill="#22f022">Turbulent Kinetic Energy</text>
<path d="M618 537.5 H635" stroke="#22f022" stroke-width="1.3"/>
<text x="423" y="556" font-family="Liberation Sans" font-size="12" fill="#111">Velocity</text>
<path d="M618 552.5 H635" stroke="#111" stroke-width="1.3"/>
<g clip-path="none">
<polyline points="315.3,573.0 322.0,592.0 330.7,613.0 339.6,626.3 347.0,631.0 354.3,636.0 354.5,604.0 356.0,542.0 356.3,520.0 358.0,512.0 361.0,504.0 366.0,498.3 376.5,498.0 383.0,493.0 388.3,488.9 395.7,488.0 398.3,490.2 429.7,491.5 457.4,494.0 476.4,495.3 496.2,500.5 511.7,505.7 529.0,511.7 563.4,519.5 580.7,524.7 605.7,530.3" fill="none" stroke="#22ee22" stroke-width="1.2" stroke-linejoin="round"/>
<polyline points="315.0,605.6 322.0,630.0 329.2,657.4 334.0,668.0 339.6,676.6 346.0,683.0 351.4,687.0 354.3,689.3 354.3,663.0 356.0,592.0 358.0,589.0 361.7,574.6 366.0,566.0 372.0,548.0 381.0,524.3 389.8,503.6 398.7,493.3 409.4,490.8 429.7,489.7 455.6,489.0 477.0,492.8 494.5,498.8 510.0,502.2 513.4,500.5 525.5,510.9 534.0,513.4 548.0,516.0 556.6,520.3 572.0,531.6 584.0,535.9 596.2,544.1 601.4,542.4 605.7,544.5" fill="none" stroke="#0a0af0" stroke-width="1.2" stroke-linejoin="round"/>
<polyline points="315.4,488.0 316.4,496.0 317.7,523.6 316.6,514.0 320.3,500.0 321.5,517.0 323.5,506.0 324.5,516.0 326.5,510.5 328.5,513.5 333.0,514.0 345.0,517.0 356.0,518.5 365.0,519.5 564.8,545.3" fill="none" stroke="#ff0a0a" stroke-width="1.2" stroke-linejoin="round"/>
<polyline points="315.5,522.5 315.5,489.0 316.5,489.0 317.3,496.6 317.3,487.0 319.0,493.0 320.5,494.3 328.6,497.3 361.0,504.5 564.8,547.6" fill="none" stroke="#000" stroke-width="1.2" stroke-linejoin="round"/>
</g></svg>
<div class="a" style="left:225px;top:791px;width:492px;height:1px;background:#c6c7c9"></div>
<div class="a" style="left:658px;top:802px;width:49px;height:20px;background:#a6e1fb;border:1px solid #62c8f8"></div>
<div class="t" style="left:668px;top:809px;color:#333">Close</div>
<!-- info dialog -->
<div class="a" style="left:747px;top:423px;width:327px;height:140px;background:#eff0f2;border:1px solid #8e8e8e;box-shadow:inset 0 0 0 1px #fbfbfb"></div>
<div class="a" style="left:748px;top:424px;width:325px;height:29px;background:#dcdee0"></div>
<div class="t" style="left:748px;top:433px;width:325px;text-align:center;color:#222;font-size:14px">Info</div>
<svg class="a" style="left:1053px;top:434px" width="10" height="10" viewBox="0 0 10 10"><path d="M1.5 1.5 L8.5 8.5 M8.5 1.5 L1.5 8.5" stroke="#a3a3a3" stroke-width="2.2"/></svg>
<div class="a" style="left:765px;top:474px;width:21px;height:23px;background:#3a4f8c"></div>
<svg class="a" style="left:765px;top:474px" width="21" height="23" viewBox="0 0 21 23"><circle cx="10.5" cy="6" r="2" fill="#fff"/><path d="M7.5 9.5 H12 V17.5 H13.5 V19 H7.5 V17.5 H9 V11 H7.5z" fill="#fff"/></svg>
<div class="t" style="left:801px;top:478px;color:#333">Error: Can't write results, undefined output file!</div>
<div class="a" style="left:748px;top:517px;width:325px;height:1px;background:#c2c3c5"></div>
<div class="a" style="left:998px;top:528px;width:64px;height:23px;background:#a6e1fb;border:1px solid #62c8f8"></div>
<div class="t" style="left:998px;top:532px;width:64px;text-align:center;color:#333">OK</div>

<!-- tolerance text -->
<div class="t" style="left:754px;top:646px;font-size:32.5px;line-height:36px;color:#787878;transform:scaleX(0.937);transform-origin:0 0">X.X+-0.1</div>
<div class="t" style="left:737px;top:680px;font-size:32.5px;line-height:36px;color:#787878;transform:scaleX(0.937);transform-origin:0 0">X.XX+-0.01</div>
<div class="t" style="left:720px;top:713px;font-size:32.5px;line-height:36px;color:#787878;transform:scaleX(0.937);transform-origin:0 0">X.XXX+-0.001</div>
<div class="t" style="left:730px;top:746px;font-size:33px;line-height:36px;color:#787878;transform:scaleX(0.937);transform-origin:0 0">ANG.+-0.5</div>
<!-- bottom toolbar icons -->
<svg class="a" style="left:719px;top:799px" width="701" height="13" viewBox="719 799 701 13">
<g transform="translate(0,2)">
<rect x="725.5" y="803.5" width="14" height="10" fill="#fff" stroke="#777"/>
<path d="M725.5 807.5 H739.5 M730.5 803.5 V813" stroke="#777"/>
<rect x="748" y="807" width="3.5" height="6" fill="#f8e0a0" stroke="#c08a30" stroke-width=".8"/>
<rect x="753" y="805" width="3.5" height="8" fill="#a8dcf8" stroke="#2a88c8" stroke-width=".8"/>
<rect x="758.5" y="802.5" width="3.5" height="10" fill="#a8dcf8" stroke="#2a88c8" stroke-width=".8"/>
<path d="M773 808 L777 805 H787 V813 H773z" fill="#c8ecfa" stroke="#4aa0d0" stroke-width=".8"/>
<path d="M797 810 L801 806 H811 V813 H797z" fill="#c8ecfa" stroke="#4aa0d0" stroke-width=".8"/>
<path d="M802 800 V806 M799.5 803 L802 806 L804.5 803" stroke="#333" stroke-width="1.3" fill="none"/>
<path d="M820 803 l4 4 m0 -4 l-4 4 M827 802 l-2 5 M830 812 l2 -4 M835 812 l-1 -3" stroke="#8a6a2a" stroke-width="1.3"/>
<path d="M843 811 H849" stroke="#444" stroke-width="2"/>
<path d="M862 812 L865 806 H874 L872 812" fill="none" stroke="#8a6a2a" stroke-width="1.3"/>
<path d="M889 809 l2 -5" stroke="#8a6a2a" stroke-width="1.4"/>
<path d="M908 803 l3 3 m0 -3 l-3 3 M916 808 l4 4 m0 -4 l-4 4" stroke="#8a6a2a" stroke-width="1.3"/>
</g>
<rect x="927.5" y="801.5" width="23" height="14" fill="#e0e1e3" stroke="#c6c6c6"/>
<path d="M931 802 v3 h3 M933 802 v6 M935 805 L938 812 L941 803 M944 810 l3 3" stroke="#555" stroke-width="1.1" fill="none"/>
<path d="M935 805 L938 812 L941 803" stroke="#8a6a2a" stroke-width="1.6" fill="none"/>
<rect x="955.5" y="804.5" width="9" height="7" fill="#fdf3d0" stroke="#888"/>
<path d="M965 808 H971 L969 813" stroke="#444" fill="none"/>
<rect x="975.5" y="801.5" width="23" height="14" fill="#e0e1e3" stroke="#c6c6c6"/>
<circle cx="982" cy="809" r="2.5" fill="#5ab85a" stroke="#2a7a2a" stroke-width=".8"/>
<path d="M984 811 l3 3" stroke="#333" stroke-width="1.2"/>
<rect x="991" y="811" width="3" height="3" fill="#e04040"/>
<path d="M1025.5 801 V812 M1066.5 801 V812" stroke="#c6c6c6"/>
<rect x="1068.5" y="802.5" width="43" height="14" fill="#eeeff1" stroke="#bdbdbd"/>
<path d="M1096.5 802 V812" stroke="#d6d6d6"/>
<path d="M1077 806 h4 v6 h-4z M1084 806 h4 v6 h-4z" fill="#444"/>
<path d="M1101 810 h5 l-2.5 2z" fill="#555"/>
<rect x="1116.5" y="802.5" width="39" height="14" fill="#eeeff1" stroke="#bdbdbd"/>
<path d="M1127 812 V808 L1130 805 H1145 V812 M1127 808 H1142 L1145 805 M1142 808 V812" fill="none" stroke="#333" stroke-width=".9"/>
<rect x="1246.5" y="802.5" width="164" height="14" fill="#fff" stroke="#c2c2c2"/>
<path d="M1395.5 803 V812" stroke="#d0d0d0"/>
</svg>
<div class="t" style="left:1256px;top:806px;color:#555">Search...</div>

</body></html>
